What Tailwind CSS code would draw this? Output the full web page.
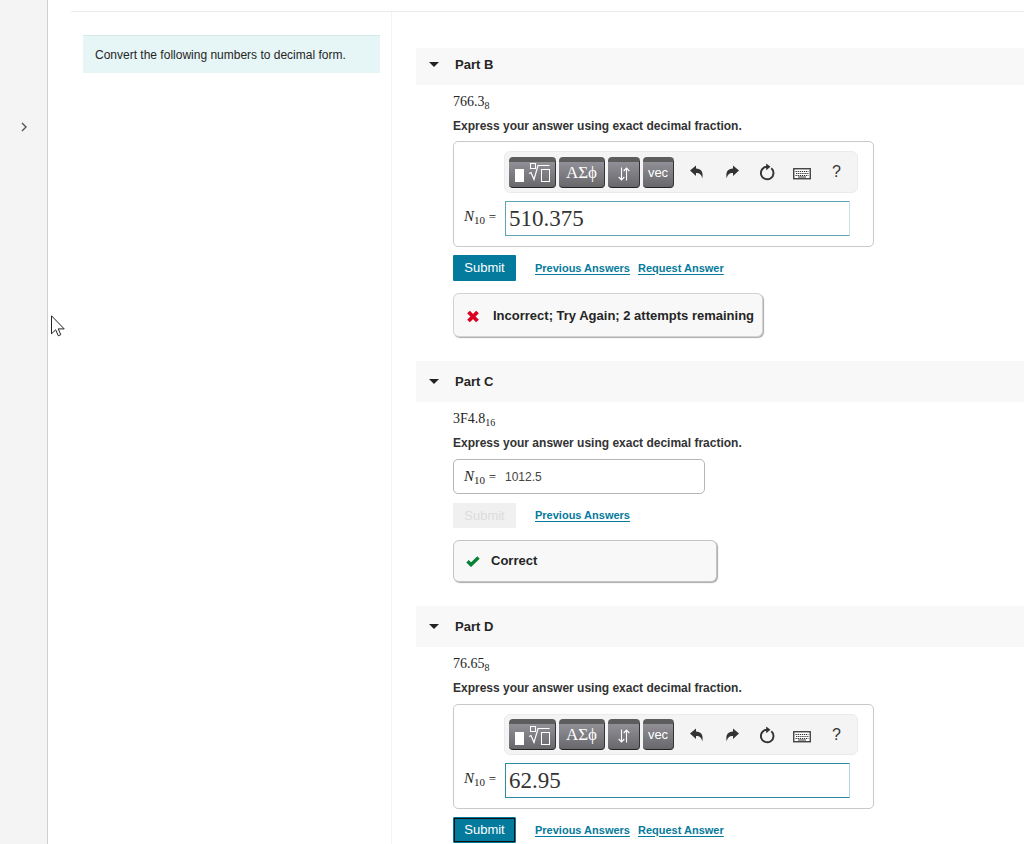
<!DOCTYPE html>
<html lang="en">
<head>
<meta charset="utf-8">
<meta name="viewport" content="width=device-width, initial-scale=1">
<title>Number conversion</title>
<script src="https://cdn.jsdelivr.net/npm/@tailwindcss/browser@4"></script>
</head>
<body class="bg-white text-[#252525] font-['Liberation_Sans',Arial,sans-serif] text-[13px]">

<svg class="hidden" aria-hidden="true">
  <symbol id="root" viewBox="0 0 36 22">
    <rect x="1" y="6" width="9" height="13" fill="#fff"/>
    <rect x="16.500" y=".5" width="5" height="5" fill="none" stroke="#fff"/>
    <path d="M15 10.500l2-1 3 7L24 2.500H35.500" fill="none" stroke="#fff" stroke-width="1.200"/>
    <rect x="27.500" y="6.500" width="8" height="12" fill="none" stroke="#fff"/>
  </symbol>
  <symbol id="arrows" viewBox="0 0 12 15">
    <path d="M3.500 .5v12.500M.7 10l2.800 3 2.800-3M8.500 13.500V1M5.700 4l2.800-3 2.800 3" fill="none" stroke="#fff" stroke-width="1.100"/>
  </symbol>
  <symbol id="undo" viewBox="0 0 14 14">
    <path d="M0 5.500L6 .5v3c5 0 7.800 3.500 6.200 10C11.800 10 10 8 6 8v3z" fill="#333"/>
  </symbol>
  <symbol id="reset" viewBox="0 0 16 18">
    <path d="M12.300 5.200A6.300 6.300 0 1 1 8 3.700" fill="none" stroke="#333" stroke-width="1.900"/>
    <path d="M7.200 .5l4.300 3.300-4.300 3.400z" fill="#333"/>
  </symbol>
  <symbol id="keyboard" viewBox="0 0 18 12">
    <rect x=".75" y=".75" width="16.500" height="10" fill="#fff" stroke="#333" stroke-width="1.300"/>
    <path d="M2.500 3.500h13M3 5.500h13M2.500 7.500h13" stroke="#333" stroke-width="1.100" stroke-dasharray="1.300 .8"/>
    <path d="M5 9h8" stroke="#333"/>
  </symbol>
</svg>

<div class="relative flex h-screen overflow-hidden">
  <aside class="w-12 shrink-0 border-r border-[#d0d0d0] bg-[#f4f4f4] pt-[120px]">
    <button class="mx-auto block px-1 py-0.5" aria-label="Expand sidebar">
      <svg class="h-2.5 w-1.5" viewBox="0 0 6 10"><path d="M1 1l4 4-4 4" fill="none" stroke="#555" stroke-width="1.400"/></svg>
    </button>
  </aside>

  <main class="ml-[23px] mt-[11px] flex min-w-0 flex-1 border-t border-[#ebebeb]">
    <section class="w-[321px] shrink-0 border-r border-[#f4f4f4] pl-3 pr-[11px] pt-[23px]">
      <p class="border-t border-[#d5e8e8] bg-[#e6f5f6] px-3 pt-[9px] pb-2 text-[12px] leading-5">Convert the following numbers to decimal form.</p>
    </section>

    <div class="min-w-0 flex-1 pl-6 pt-9">

      <section>
        <h2 class="flex h-[37px] items-center bg-[#f8f8f8] pb-1 pl-3 font-bold">
          <button class="flex items-center gap-4"><svg class="ml-px h-[5px] w-[10px]" viewBox="0 0 10 5"><path d="M0 0h10L5 5z" fill="#222"/></svg>Part B</button>
        </h2>
        <div class="pl-[37px] pt-[7px] pb-6">
          <p class="h-6 font-['Liberation_Serif',serif] text-[14px] leading-5">766.3<sub class="text-[10px]">8</sub></p>
          <p class="h-[25px] text-[12px] font-bold leading-5 text-[#333]">Express your answer using exact decimal fraction.</p>
          <div class="grid w-[421px] grid-cols-[40px_354px] gap-y-2 rounded-[5px] border border-[#c9c9c9] pt-[9px] pr-[14px] pb-[10px] pl-[10px]">
            <div class="col-start-2 flex h-[42px] items-center rounded-[6px] border border-[#ebebeb] bg-[#f4f4f4] pl-1 text-white" role="toolbar">
              <button aria-label="Templates" class="mr-[3px] flex h-[31px] w-[47px] items-center justify-center rounded-[4px] border-t-[5px] border-r border-b border-[#5d5d5d] border-r-[#333] border-b-[#222] bg-linear-to-b from-[#929097] to-[#68686b]"><svg class="h-[22px] w-9"><use href="#root"/></svg></button>
              <button class="mr-[3px] h-[31px] w-[46px] rounded-[4px] border-t-[5px] border-r border-b border-[#5d5d5d] border-r-[#333] border-b-[#222] bg-linear-to-b from-[#929097] to-[#68686b] pb-[3px] font-['Liberation_Serif',serif] text-[17px] leading-5">ΑΣϕ</button>
              <button aria-label="Arrows" class="mr-[3px] flex h-[31px] w-8 items-center justify-center rounded-[4px] border-t-[5px] border-r border-b border-[#5d5d5d] border-r-[#333] border-b-[#222] bg-linear-to-b from-[#929097] to-[#68686b]"><svg class="h-[15px] w-3"><use href="#arrows"/></svg></button>
              <button class="mr-[5px] h-[31px] w-[31px] rounded-[4px] border-t-[5px] border-r border-b border-[#5d5d5d] border-r-[#333] border-b-[#222] bg-linear-to-b from-[#929097] to-[#68686b] pb-[3px] text-[13px] leading-5">vec</button>
              <button aria-label="Undo" class="flex h-8 w-[35px] items-center justify-center"><svg class="h-[14px] w-[14px]"><use href="#undo"/></svg></button>
              <button aria-label="Redo" class="flex h-8 w-[35px] items-center justify-center"><svg class="h-[14px] w-[14px] -scale-x-100"><use href="#undo"/></svg></button>
              <button aria-label="Reset" class="flex h-8 w-[35px] items-center justify-center"><svg class="h-[18px] w-4"><use href="#reset"/></svg></button>
              <button aria-label="Keyboard" class="flex h-8 w-[35px] items-center justify-center pt-1"><svg class="h-3 w-[18px]"><use href="#keyboard"/></svg></button>
              <button aria-label="Help" class="flex h-8 w-[35px] items-center justify-center text-[16px] text-[#333]">?</button>
            </div>
            <label for="b" class="self-center whitespace-nowrap pb-1 font-['Liberation_Serif',serif] text-[15px] leading-5"><i>N</i><sub class="text-[11px]">10</sub> <span class="text-[13px]">=</span></label>
            <input id="b" value="510.375" class="ml-px h-[35px] w-[345px] border border-[#5ba5b5] border-r-[#c9e0e5] px-[3px] font-['Liberation_Serif',serif] text-[23px] text-[#333] outline-none">
          </div>
          <div class="mt-2 flex h-[26px] items-center">
            <button class="h-[26px] w-[63px] rounded-[1px] bg-[#047a9c] text-white">Submit</button>
            <a href="#" class="ml-[19px] text-[11px] font-bold text-[#047a9c] underline underline-offset-2">Previous Answers</a>
            <a href="#" class="ml-2 text-[11px] font-bold text-[#047a9c] underline underline-offset-2">Request Answer</a>
          </div>
          <p class="mt-3 flex h-11 w-[310px] items-center rounded-[6px] border border-[#d2d2d2] bg-[#f8f8f8] pl-3 pt-0.5 font-bold shadow-[1px_1px_1px_#aaa]">
            <svg class="mr-[13px] h-[13px] w-[14px]" viewBox="0 0 14 13"><path d="M2.500 2l9 9M11.500 2l-9 9" stroke="#db0020" stroke-width="3.800"/></svg>Incorrect; Try Again; 2 attempts remaining
          </p>
        </div>
      </section>

      <section>
        <h2 class="flex h-[41px] items-center bg-[#f8f8f8] pl-3 font-bold">
          <button class="flex items-center gap-4"><svg class="ml-px h-[5px] w-[10px]" viewBox="0 0 10 5"><path d="M0 0h10L5 5z" fill="#222"/></svg>Part C</button>
        </h2>
        <div class="pl-[37px] pt-[7px] pb-6">
          <p class="h-6 font-['Liberation_Serif',serif] text-[14px] leading-5">3F4.8<sub class="text-[10px]">16</sub></p>
          <p class="h-[26px] text-[12px] font-bold leading-5 text-[#333]">Express your answer using exact decimal fraction.</p>
          <div class="flex h-[35px] w-[252px] items-center rounded-[5px] border border-[#b5b5b5] pl-[10px]">
            <span class="w-[41px] whitespace-nowrap font-['Liberation_Serif',serif] text-[15px] leading-5"><i>N</i><sub class="text-[11px]">10</sub> <span class="text-[13px]">=</span></span>
            <span class="text-[12px] text-[#444]">1012.5</span>
          </div>
          <div class="mt-[9px] flex h-[25px] items-center">
            <button disabled class="h-[25px] w-[63px] bg-[#f0f0f0] text-[#dcdcdc]">Submit</button>
            <a href="#" class="ml-[19px] text-[11px] font-bold text-[#047a9c] underline underline-offset-2">Previous Answers</a>
          </div>
          <p class="mt-3 flex h-[42px] w-[264px] items-center rounded-[6px] border border-[#c4c4c4] bg-[#f8f8f8] pl-3 font-bold shadow-[1px_1px_1px_#aaa]">
            <svg class="mr-[11px] h-[11px] w-[14px]" viewBox="0 0 14 11"><path d="M1.500 5.200l3.500 3.500L12.500 1.500" fill="none" stroke="#038238" stroke-width="3.400"/></svg>Correct
          </p>
        </div>
      </section>

      <section>
        <h2 class="flex h-[41px] items-center bg-[#f8f8f8] pl-3 font-bold">
          <button class="flex items-center gap-4"><svg class="ml-px h-[5px] w-[10px]" viewBox="0 0 10 5"><path d="M0 0h10L5 5z" fill="#222"/></svg>Part D</button>
        </h2>
        <div class="pl-[37px] pt-[7px]">
          <p class="h-6 font-['Liberation_Serif',serif] text-[14px] leading-5">76.65<sub class="text-[10px]">8</sub></p>
          <p class="h-[26px] text-[12px] font-bold leading-5 text-[#333]">Express your answer using exact decimal fraction.</p>
          <div class="grid w-[421px] grid-cols-[40px_354px] gap-y-2 rounded-[5px] border border-[#c9c9c9] pt-[9px] pr-[14px] pb-[10px] pl-[10px]">
            <div class="col-start-2 flex h-[41px] items-center rounded-[6px] border border-[#ebebeb] bg-[#f4f4f4] pl-1 text-white" role="toolbar">
              <button aria-label="Templates" class="mr-[3px] flex h-[31px] w-[47px] items-center justify-center rounded-[4px] border-t-[5px] border-r border-b border-[#5d5d5d] border-r-[#333] border-b-[#222] bg-linear-to-b from-[#929097] to-[#68686b]"><svg class="h-[22px] w-9"><use href="#root"/></svg></button>
              <button class="mr-[3px] h-[31px] w-[46px] rounded-[4px] border-t-[5px] border-r border-b border-[#5d5d5d] border-r-[#333] border-b-[#222] bg-linear-to-b from-[#929097] to-[#68686b] pb-[3px] font-['Liberation_Serif',serif] text-[17px] leading-5">ΑΣϕ</button>
              <button aria-label="Arrows" class="mr-[3px] flex h-[31px] w-8 items-center justify-center rounded-[4px] border-t-[5px] border-r border-b border-[#5d5d5d] border-r-[#333] border-b-[#222] bg-linear-to-b from-[#929097] to-[#68686b]"><svg class="h-[15px] w-3"><use href="#arrows"/></svg></button>
              <button class="mr-[5px] h-[31px] w-[31px] rounded-[4px] border-t-[5px] border-r border-b border-[#5d5d5d] border-r-[#333] border-b-[#222] bg-linear-to-b from-[#929097] to-[#68686b] pb-[3px] text-[13px] leading-5">vec</button>
              <button aria-label="Undo" class="flex h-8 w-[35px] items-center justify-center"><svg class="h-[14px] w-[14px]"><use href="#undo"/></svg></button>
              <button aria-label="Redo" class="flex h-8 w-[35px] items-center justify-center"><svg class="h-[14px] w-[14px] -scale-x-100"><use href="#undo"/></svg></button>
              <button aria-label="Reset" class="flex h-8 w-[35px] items-center justify-center"><svg class="h-[18px] w-4"><use href="#reset"/></svg></button>
              <button aria-label="Keyboard" class="flex h-8 w-[35px] items-center justify-center pt-1"><svg class="h-3 w-[18px]"><use href="#keyboard"/></svg></button>
              <button aria-label="Help" class="flex h-8 w-[35px] items-center justify-center text-[16px] text-[#333]">?</button>
            </div>
            <label for="d" class="self-center whitespace-nowrap pb-1 font-['Liberation_Serif',serif] text-[15px] leading-5"><i>N</i><sub class="text-[11px]">10</sub> <span class="text-[13px]">=</span></label>
            <input id="d" value="62.95" class="ml-px h-[35px] w-[345px] border border-[#2f8ba0] border-r-[#b5d5dc] px-[3px] font-['Liberation_Serif',serif] text-[23px] text-[#333] outline-none">
          </div>
          <div class="mt-2 flex h-[26px] items-center">
            <button class="h-[26px] w-[63px] rounded-[1px] border border-[#047a9c] bg-[#047a9c] text-white outline-1 -outline-offset-2 outline-[#101010]">Submit</button>
            <a href="#" class="ml-[19px] text-[11px] font-bold text-[#047a9c] underline underline-offset-2">Previous Answers</a>
            <a href="#" class="ml-2 text-[11px] font-bold text-[#047a9c] underline underline-offset-2">Request Answer</a>
          </div>
        </div>
      </section>
    </div>
  </main>

  <!-- Mouse pointer -->
  <svg class="pointer-events-none absolute left-[51px] top-[315px] h-[22px] w-[15px]" viewBox="0 0 15 22" aria-hidden="true"><path d="M.5.8v18l4.200-4 2.600 6 2.500-1.100-2.600-5.800h6z" fill="#fff" stroke="#222"/></svg>
</div>
</body>
</html>
